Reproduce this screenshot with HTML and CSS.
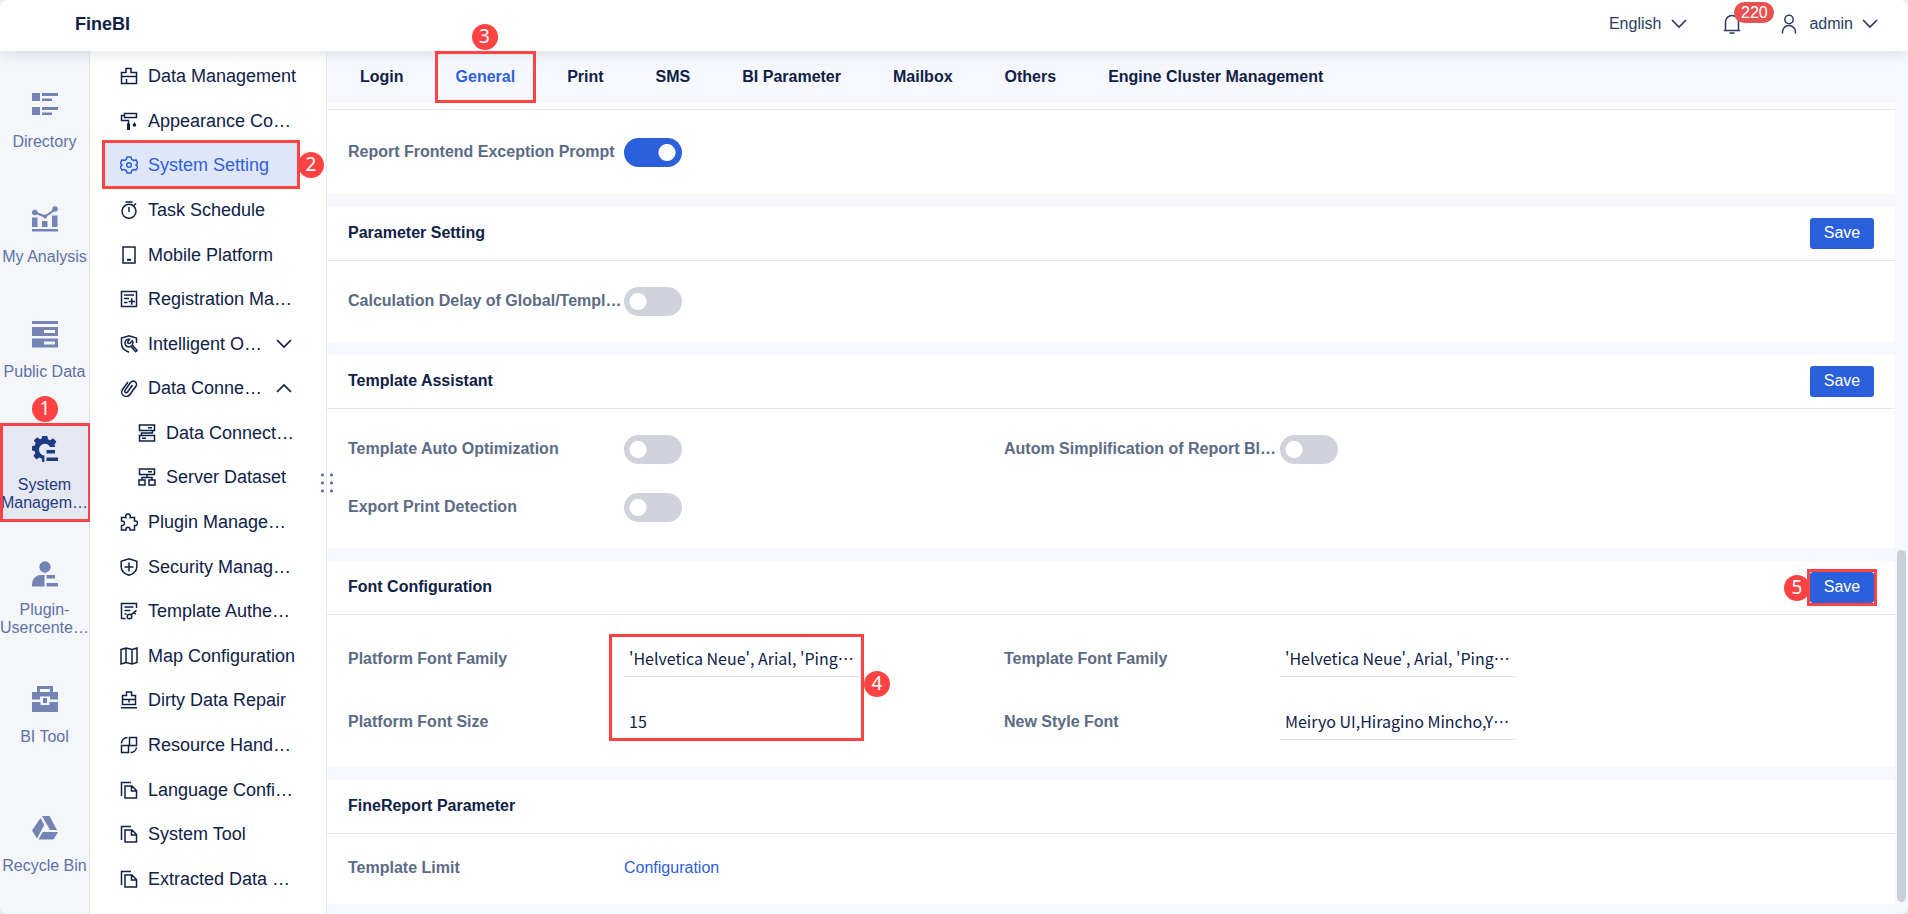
FILE: index.html
```html
<!DOCTYPE html>
<html lang="en">
<head>
<meta charset="utf-8">
<title>FineBI</title>
<link rel="stylesheet" href="styles.css">
</head>
<body>
<svg class="sprite" aria-hidden="true">
  <symbol id="i-down" viewBox="0 0 16 10"><path d="M1 1l7 7 7-7"/></symbol>
  <symbol id="i-up" viewBox="0 0 16 10"><path d="M1 9l7-7 7 7"/></symbol>
  <symbol id="i-copy" viewBox="0 0 18 18"><path d="M1.500 15V1.500H11M5 5h7l4.500 4.500V17H5zM11.500 5v5h5"/></symbol>
</svg>
<div class="app">
  <header class="topbar">
    <h1 class="brand">FineBI</h1>
    <div class="topbar-tools">
      <button class="tool lang">English <svg class="chev"><use href="#i-down"/></svg></button>
      <button class="tool bell" aria-label="Messages">
        <svg viewBox="0 0 18 20" width="18" height="20"><path d="M1 16.500h16M2.500 16V8a6.500 6.500 0 0 1 13 0v8M6.500 19h5"/></svg>
        <span class="count">220</span>
      </button>
      <button class="tool user"><svg viewBox="0 0 16 20" width="16" height="20"><circle cx="8" cy="5.500" r="4.200"/><path d="M1.500 19.500v-1.500a6.500 6.500 0 0 1 13 0v1.500"/></svg> admin <svg class="chev"><use href="#i-down"/></svg></button>
    </div>
  </header>
  <div class="workspace">
    <nav class="rail" aria-label="Modules">
      <a class="rail-item" href="#"><svg viewBox="0 0 26 26"><path d="M0 2h8v8H0zM10 2h16v3H10zM10 7.500h10V10H10zM0 16h8v8H0zM10 16h16v3H10zM10 21.500h10V24H10z"/></svg><span>Directory</span></a>
      <a class="rail-item" href="#"><svg viewBox="0 0 26 26"><path d="M0 11.500h5.500V21H0zM10 15h5.500v6H10zM20 9.500h5.500V21H20zM0 23h26v2.500H0z"/><path class="ln" d="M3 6.500l10 4 10-7"/><circle cx="2.800" cy="6.500" r="2.800"/><circle cx="13" cy="10.500" r="2"/><circle cx="23" cy="3" r="2.800"/></svg><span>My Analysis</span></a>
      <a class="rail-item" href="#"><svg viewBox="0 0 26 26"><path fill-rule="evenodd" d="M0 0h26v3H0zM0 6h26v9H0zM12 9v3h11V9zM0 17.500h26v9H0zM12 20.500v3h11v-3z"/></svg><span>Public Data</span></a>
      <a class="rail-item double current" href="#"><svg viewBox="0 0 26 26"><path fill-rule="evenodd" d="M10.200 0h5.200l.6 3.300 2.200 1 2.900-2 3.300 3.500-1.900 2.800.7 2.400H18a5.800 5.800 0 1 0-5.600 8.400V26h-2.200l-.6-3.400-2.300-1-2.900 1.900L1.400 20l1.900-2.800-.9-2.200L0 14.500v-4.300l2.700-.7 1-2.400-1.900-2.700 3.300-3.100L8 3.300l1.700-.8zM14.500 14h8.500v3.500h-8.500zM14.500 21.500H26V25H14.500z"/></svg><span>System</span><span>Managem…</span><i class="frame"></i><b class="step step-1">1</b></a>
      <a class="rail-item double" href="#"><svg viewBox="0 0 26 26"><circle cx="13" cy="6" r="5.700"/><path d="M0 25.500v-3a9 9 0 0 1 9-8.500h3.500v11.500zM14.500 14H23v3.500h-8.500zM14.500 22H26v3.500H14.500z"/></svg><span>Plugin-</span><span>Usercente…</span></a>
      <a class="rail-item" href="#"><svg viewBox="0 0 26 26"><path fill-rule="evenodd" d="M5 6V0h16v6h5v7.500h-8v-3H8v3H0V6zM8 6h10V3H8zM0 16h8.500v3h9v-3H26v10H0zM11 12h4v5h-4z"/></svg><span>BI Tool</span></a>
      <a class="rail-item" href="#"><svg viewBox="0 0 26 26"><path d="M10 1h7.500L25 15h-7zM8.500 3l3.700 7L5 23.500 0 15.500zM10.500 17H26l-4.500 7.500H6.500z"/></svg><span>Recycle Bin</span></a>
    </nav>
    <nav class="menu" aria-label="System management">
      <a href="#"><svg viewBox="0 0 18 18"><path d="M6 5.500V1.500h5v4h5.500v11h-15v-11zM1.500 9.500h15M6.500 12v4"/></svg>Data Management</a>
      <a href="#"><svg viewBox="0 0 18 18"><path d="M4.500 1.500h12v4h-12zM4.500 3.500h-3v5h7V12"/><path class="solid" d="M7 11.500h3V18H7zM14.500 10l1.800 3a1.800 1.800 0 1 1-3.600 0z"/></svg>Appearance Co…</a>
      <a href="#" class="current"><svg viewBox="0 0 18 18"><path d="M7 1h4l.7 2.400 1.900 1.100 2.400-.6 1.700 3.200L16 9l1.700 1.900-1.700 3.200-2.400-.6-1.900 1.100L11 17H7l-.7-2.400-1.900-1.100-2.400.6-1.700-3.200L2 9 .3 7.100 2 3.900l2.400.6 1.900-1.100z"/><circle cx="9" cy="9" r="2.300"/></svg>System Setting<i class="frame"></i><b class="step step-2">2</b></a>
      <a href="#"><svg viewBox="0 0 18 18"><circle cx="9" cy="10.300" r="7"/><path d="M5.500 1h7M9 6v5M14 4.500L16 2.500"/></svg>Task Schedule</a>
      <a href="#"><svg viewBox="0 0 18 18"><path d="M3 1h12v16H3z"/><path d="M7 13.800h4" stroke-width="2"/></svg>Mobile Platform</a>
      <a href="#"><svg viewBox="0 0 18 18"><path d="M1.500 1.500h15v15h-15zM4 5h10M4 8.500h5M4 12.500h3.500M8.500 11.500h6.500M11.800 8.300v6.500"/></svg>Registration Ma…</a>
      <a href="#"><svg viewBox="0 0 18 18"><path d="M9 17.200C4.500 15.500 1.500 13 1.500 9V3L9 .9l7.500 2.100v5"/><path d="M9.500 4.300a3.800 3.800 0 1 0 1.200 7l5 5.400 1.400-1.400-5-5.200a3.800 3.800 0 0 0 .2-4.300L9.800 8.500 8 8.300 7.800 6.800z"/></svg>Intelligent O…<svg class="chev"><use href="#i-down"/></svg></a>
      <a href="#"><svg viewBox="0 0 18 18"><path d="M12.500 6L7.500 13a1.500 1.500 0 0 1-2.500-1.700L10.500 3.500a3.300 3.300 0 0 1 5.400 3.800L10 15.500a4.500 4.500 0 0 1-7.500-5L8 3"/></svg>Data Conne…<svg class="chev"><use href="#i-up"/></svg></a>
      <a href="#" class="sub"><svg viewBox="0 0 18 18"><path d="M1.500 1h15v5.500h-15zM1.500 11.500h15V17h-15zM3.500 11.500V9h11V6.500M10 3.800h4M4 14.200h4"/></svg>Data Connect…</a>
      <a href="#" class="sub"><svg viewBox="0 0 18 18"><path d="M1.500 1h15v5.500h-15zM1 12h6v5H1zM11 12h6v5h-6zM9 6.500v3M4 12V9.500h10V12M10 3.800h4"/></svg>Server Dataset</a>
      <a href="#"><svg viewBox="0 0 18 18"><path d="M1.500 4.500H6C5 2.500 6.500 1 8 1s3 1.500 2 3.500h4.500V8c2-.5 3 .8 3 2.200s-1 2.700-3 2.300V17H10c.3-1.800-.7-2.800-2-2.800S5.700 15.200 6 17H1.500v-4.500c2 .3 3-.8 3-2.200s-1-2.600-3-2.300z"/></svg>Plugin Manage…</a>
      <a href="#"><svg viewBox="0 0 18 18"><path d="M9 .8l7.800 2.500v5.500c0 4-3 7-7.800 8.500C4.200 15.800 1.200 12.800 1.200 8.800V3.300zM9 4.500v9M4.500 9h9"/></svg>Security Manag…</a>
      <a href="#"><svg viewBox="0 0 18 18"><path d="M5.500 16.500h-4v-15h15V6M4.500 5h9M4.500 8.500h6M4.500 12h2"/><circle cx="9.500" cy="14.500" r="2.300"/><path d="M11 12.800l5.500-4.500M14 10.500l1.700 1.700"/></svg>Template Authe…</a>
      <a href="#"><svg viewBox="0 0 18 18"><path d="M1 2.500l5-1.500 6 1.500 5-1.500v14.500l-5 1.500-6-1.500-5 1.500zM6 1v14.500M12 2.500V17"/></svg>Map Configuration</a>
      <a href="#"><svg viewBox="0 0 18 18"><path d="M6.500 4.500V1h5v3.500h4v9h-13v-9zM2.500 8.500h13M9 8.500v3M1 16.800h16"/></svg>Dirty Data Repair</a>
      <a href="#"><svg viewBox="0 0 18 18"><path d="M1.500 9.500h7v7h-7zM9.500 1.500h7v8h-7zM1.500 7.500A6 6 0 0 1 7.500 1.500M16.500 11.500a6 6 0 0 1-6 5"/></svg>Resource Hand…</a>
      <a href="#"><svg><use href="#i-copy"/></svg>Language Confi…</a>
      <a href="#"><svg><use href="#i-copy"/></svg>System Tool</a>
      <a href="#"><svg><use href="#i-copy"/></svg>Extracted Data …</a>
      <span class="resizer"></span>
    </nav>
    <main class="content">
      <nav class="tabs" aria-label="Settings">
        <a href="#">Login</a><a href="#" class="current">General<i class="frame"></i><b class="step step-3">3</b></a><a href="#">Print</a><a href="#">SMS</a><a href="#">BI Parameter</a><a href="#">Mailbox</a><a href="#">Others</a><a href="#">Engine Cluster Management</a>
      </nav>
      <div class="scroll">
        <div class="cards">
          <section class="card">
            <div class="card-edge"></div>
            <div class="card-body first">
              <div class="field"><label for="t1">Report Frontend Exception Prompt</label><input id="t1" class="switch" type="checkbox" checked></div>
            </div>
          </section>
          <section class="card">
            <div class="card-head"><h2>Parameter Setting</h2><button class="save">Save</button></div>
            <div class="card-body">
              <div class="field"><label for="t2">Calculation Delay of Global/Templ…</label><input id="t2" class="switch" type="checkbox"></div>
            </div>
          </section>
          <section class="card">
            <div class="card-head"><h2>Template Assistant</h2><button class="save">Save</button></div>
            <div class="card-body">
              <div class="field"><label for="t3">Template Auto Optimization</label><input id="t3" class="switch" type="checkbox"></div>
              <div class="field"><label for="t4">Autom Simplification of Report Bl…</label><input id="t4" class="switch" type="checkbox"></div>
              <div class="field"><label for="t5">Export Print Detection</label><input id="t5" class="switch" type="checkbox"></div>
            </div>
          </section>
          <section class="card">
            <div class="card-head"><h2>Font Configuration</h2><div class="marked"><button class="save">Save</button><i class="frame"></i><b class="step step-5">5</b></div></div>
            <div class="card-body fonts">
              <div class="field"><label for="f1">Platform Font Family</label><input id="f1" class="text" lang="zh-CN" type="text" value="'Helvetica Neue', Arial, 'Ping…"></div>
              <div class="field"><label for="f2">Template Font Family</label><input id="f2" class="text" lang="zh-CN" type="text" value="'Helvetica Neue', Arial, 'Ping…"></div>
              <div class="field"><label for="f3">Platform Font Size</label><input id="f3" class="text" lang="zh-CN" type="text" value="15"></div>
              <div class="field"><label for="f4">New Style Font</label><input id="f4" class="text" lang="zh-CN" type="text" value="Meiryo UI,Hiragino Mincho,Y…"></div>
              <i class="frame"></i><b class="step step-4">4</b>
            </div>
          </section>
          <section class="card">
            <div class="card-head"><h2>FineReport Parameter</h2></div>
            <div class="card-body limit">
              <div class="field"><span class="name">Template Limit</span><a class="link" href="#">Configuration</a></div>
            </div>
          </section>
        </div>
        <div class="track"><div class="thumb"></div></div>
      </div>
    </main>
  </div>
</div>
</body>
</html>
```
FILE: styles.css
```css
* { box-sizing: border-box; }
body {
  margin: 0;
  background: #e9ebee;
  color: #0f2147;
  font: 16px/18px "Liberation Sans", Arial, sans-serif;
}
a { color: inherit; text-decoration: none; }
button { border: 0; background: none; padding: 0; font: inherit; color: inherit; }
h1, h2 { margin: 0; }
svg { fill: none; stroke: currentColor; stroke-width: 1.5; flex: none; }
.sprite { position: absolute; width: 0; height: 0; }
.chev { width: 16px; height: 10px; stroke-width: 1.7; }
.solid { fill: currentColor; stroke: none; }

.app {
  display: flex;
  flex-direction: column;
  height: 100vh;
  overflow: hidden;
  border-radius: 8px;
  background: #f7f8fd;
}

/* Top bar */
.topbar {
  position: relative;
  z-index: 1;
  display: flex;
  align-items: center;
  justify-content: space-between;
  flex: none;
  height: 51px;
  padding: 0 30px 3px 75px;
  background: #fff;
  box-shadow: 0 2px 14px rgba(20, 50, 80, 0.14);
}
.brand { font-size: 18px; line-height: 24px; }
.topbar-tools { display: flex; align-items: center; color: #2b3d62; }
.tool { position: relative; display: flex; align-items: center; }
.lang { gap: 10px; margin-right: 36px; }
.bell { margin-right: 40px; }
.user { gap: 12px; }
.user .chev { margin-left: -3px; }
.count {
  position: absolute;
  left: 11px;
  top: -12px;
  width: 40px;
  border-radius: 11px;
  background: #e65251;
  color: #fff;
  line-height: 21px;
  text-align: center;
}

.workspace { display: flex; flex: 1; min-height: 0; }

/* Module rail */
.rail {
  flex: none;
  width: 90px;
  padding-top: 27px;
  border-right: 1px solid #e3e6ed;
  background: #f4f6fa;
  color: #6071a6;
}
.rail-item {
  position: relative;
  display: flex;
  flex-direction: column;
  align-items: center;
  margin-bottom: 31px;
  padding: 13px 0 11px;
  white-space: nowrap;
}
.rail-item svg {
  width: 26px;
  height: 26px;
  margin-bottom: 16px;
  fill: #7384b4;
  stroke: none;
  overflow: visible;
}
.rail-item .ln { fill: none; stroke: #7384b4; stroke-width: 2; }
.rail-item.double { margin-bottom: 26px; }
.rail-item.double svg { margin-bottom: 14px; }
.rail-item.double { padding-bottom: 10px; }
.rail-item:last-child { margin-top: 45px; }
.rail-item.current { background: #e5e8f1; color: #1f3a85; }
.rail-item.current svg { fill: #1f3a85; }

/* Section menu */
.menu {
  position: relative;
  display: flex;
  flex-direction: column;
  flex: none;
  width: 237px;
  padding: 3px 26px 13px 12px;
  border-right: 1px solid #e6e9f0;
  background: #fff;
  font-size: 18px;
  line-height: 24px;
}
.menu a {
  position: relative;
  display: flex;
  flex: 1;
  align-items: center;
  gap: 10px;
  padding-left: 18px;
  white-space: nowrap;
}
.menu a > svg:first-child { width: 18px; height: 18px; }
.menu a > .chev { margin-left: auto; margin-right: 8px; }
.menu .sub { padding-left: 36px; }
.menu .current { background: #e0e6fa; color: #2e60dc; }
.resizer {
  position: absolute;
  right: -10px;
  top: calc(50% - 12px);
  width: 18px;
  height: 24px;
  background: radial-gradient(circle, #5c6f8c 1px, transparent 2px) 0 0 / 9px 8px;
}

/* Callouts */
.frame { position: absolute; inset: 0; border: 3px solid #ff4343; }
.step {
  position: absolute;
  z-index: 2;
  width: 26px;
  height: 26px;
  border-radius: 50%;
  background: #ff4343;
  color: #fff;
  font: 19px/25px "Noto Sans", sans-serif;
  text-align: center;
}
.rail-item .frame { right: -2px; }
.menu .frame { inset: -3px 0 -1px; }
.tabs .frame { inset: 0 5px; z-index: 2; }
.marked { position: relative; display: flex; }
.marked .frame { inset: -3px; z-index: 1; }
.fonts .frame { inset: 19px auto auto 282px; width: 255px; height: 107px; }
.step-1 { left: 32px; top: -27px; }
.step-2 { left: 196px; top: 9px; }
.step-3 { left: 42px; top: -27px; }
.step-4 { left: 537px; top: 56px; }
.step-5 { left: -26px; top: 3px; z-index: 0; }

/* Content */
.content { display: flex; flex-direction: column; flex: 1; min-width: 0; }
.tabs { display: flex; flex: none; padding-left: 7px; font-weight: bold; }
.tabs a { position: relative; padding: 0 26px; line-height: 52px; white-space: nowrap; }
.tabs .current { color: #2e60dc; }
.scroll { display: flex; flex: 1; min-height: 0; overflow: hidden; }
.cards { display: flex; flex-direction: column; flex: 1; gap: 13px; min-width: 0; }
.card { flex: none; background: #fff; }
.card-edge { height: 7px; border-bottom: 1px solid #e2e5ed; }
.card-head {
  display: flex;
  align-items: center;
  justify-content: space-between;
  height: 54px;
  padding: 0 21px;
  border-bottom: 1px solid #e2e5ed;
}
h2 { padding-bottom: 2px; font-size: 16px; line-height: 18px; }
.save {
  width: 64px;
  height: 31px;
  padding-bottom: 2px;
  border-radius: 3px;
  background: #2b60dc;
  color: #fff;
}
.card-body {
  position: relative;
  display: grid;
  grid-template-columns: 656px 1fr;
  row-gap: 29px;
  padding: 26px 21px;
}
.card-body.first { padding: 28px 21px 27px; }
.card-body.fonts { row-gap: 27px; padding: 26px 21px 27px; }
.card-body.limit { padding: 25px 21px 27px; }
.field { display: flex; align-items: center; }
.field label, .name {
  flex: none;
  width: 276px;
  color: #5c6b85;
  font-weight: bold;
  white-space: nowrap;
}
.field label { padding-bottom: 1px; }
.switch {
  appearance: none;
  width: 58px;
  height: 29px;
  margin: 0;
  border-radius: 15px;
  background: radial-gradient(circle at 14px 50%, #fff 8px, transparent 9px) #d0d3dc;
}
.switch:checked { background: radial-gradient(circle at 43px 50%, #fff 8px, transparent 9px) #2b60dc; }
.text {
  width: 236px;
  height: 36px;
  padding: 0 5px 1px;
  border: 0;
  border-bottom: 1px solid #e0e2ea;
  background: transparent;
  color: #0f2147;
  font: 16px/24px "Noto Sans CJK SC", sans-serif;
}
.link { color: #2e60dc; }
.track { display: flex; flex-direction: column; justify-content: flex-end; flex: none; width: 13px; padding: 0 2px 12px; }
.thumb { height: 352px; border-radius: 5px; background: #cad0da; }
```
